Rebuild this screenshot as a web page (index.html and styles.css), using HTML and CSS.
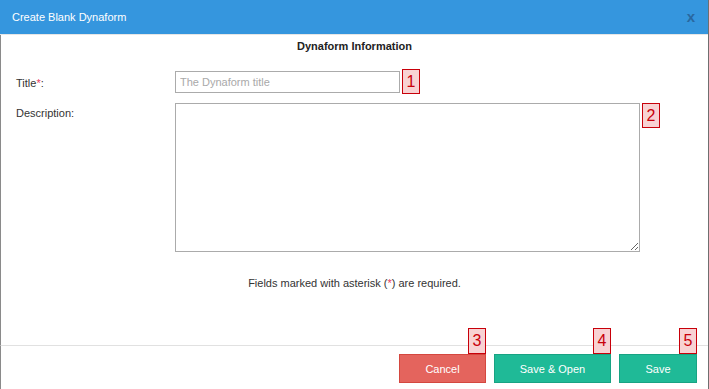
FILE: index.html
```html
<!DOCTYPE html>
<html lang="en">
<head>
    <meta charset="UTF-8">
    <title>Create Blank Dynaform</title>
    <link rel="stylesheet" href="styles.css">
</head>
<body>
    <div class="dialog">
        <div class="dialog-header">
            <span class="dialog-title">Create Blank Dynaform</span>
            <span class="dialog-close">x</span>
        </div>

        <div class="dialog-body">
            <div class="section-title">Dynaform Information</div>

            <div class="form-row">
                <label class="form-label" for="dynTitle">Title<span class="req">*</span>:</label>
                <div class="field">
                    <input type="text" id="dynTitle" class="text-input" placeholder="The Dynaform title">
                    <span class="marker">1</span>
                </div>
            </div>

            <div class="form-row row-desc">
                <label class="form-label" for="dynDesc">Description:</label>
                <div class="field">
                    <textarea id="dynDesc" class="text-area"></textarea>
                    <span class="marker">2</span>
                </div>
            </div>

            <p class="note">Fields marked with asterisk (<span class="req">*</span>) are required.</p>
        </div>

        <div class="dialog-footer">
            <div class="btn-wrap">
                <button class="btn btn-cancel">Cancel</button>
                <span class="marker marker-btn">3</span>
            </div>
            <div class="btn-wrap">
                <button class="btn btn-save btn-wide">Save &amp; Open</button>
                <span class="marker marker-btn">4</span>
            </div>
            <div class="btn-wrap">
                <button class="btn btn-save">Save</button>
                <span class="marker marker-btn">5</span>
            </div>
        </div>
    </div>
</body>
</html>
```

FILE: styles.css
```css
body {
    margin: 0;
    font-family: "Liberation Sans", Arial, sans-serif;
    font-size: 11px;
    color: #333;
    background: #fff;
}
.dialog {
    width: 709px;
    height: 389px;
    display: flex;
    flex-direction: column;
    box-sizing: border-box;
    border-right: 1px solid #6f6f6f;
}
.dialog-header {
    height: 34px;
    background-color: #3596de;
    border-bottom: 1px solid #e6e6e6;
    display: flex;
    align-items: center;
    justify-content: space-between;
    padding: 0 12px;
    flex-shrink: 0;
}
.dialog-title {
    color: #fff;
    font-size: 11px;
}
.dialog-close {
    color: #2968a0;
    font-weight: bold;
    font-size: 15px;
    margin-right: 1px;
    margin-top: -1px;
}
.dialog-body {
    flex: 1;
    border-left: 1px solid #8a8a8a;
    padding-top: 4px;
}
.section-title {
    text-align: center;
    font-weight: bold;
    line-height: 14px;
    color: #222;
}
.form-row {
    display: flex;
    margin-top: 18px;
}
.row-desc {
    margin-top: 9px;
}
.form-label {
    width: 159px;
    padding-left: 15px;
    line-height: 24px;
    height: 22px;
    color: #333;
}
.row-desc .form-label {
    line-height: 20px;
}
.req {
    color: #e8385f;
}
.field {
    display: flex;
    align-items: flex-start;
    gap: 2px;
}
.text-input {
    width: 225px;
    height: 22px;
    box-sizing: border-box;
    border: 1px solid #ababab;
    padding: 0 4px;
    font-family: "Liberation Sans", Arial, sans-serif;
    font-size: 11px;
    color: #333;
    outline: none;
}
.text-input::placeholder {
    color: #a9a9a9;
}
.text-area {
    width: 465px;
    height: 149px;
    box-sizing: border-box;
    border: 1px solid #ababab;
    margin: 0;
    font-family: "Liberation Sans", Arial, sans-serif;
    font-size: 11px;
    outline: none;
}
.marker {
    position: relative;
    width: 18px;
    height: 25px;
    box-sizing: border-box;
    background: #f8d2d3;
    border: 1px solid #c8000a;
    color: #c8000a;
    font-size: 16px;
    line-height: 23px;
    text-align: center;
}
.field .marker {
    margin-top: -2px;
}
.row-desc .field .marker {
    margin-top: 0;
}
.note {
    margin: 24px 0 0;
    text-align: center;
    line-height: 14px;
    color: #333;
}
.dialog-footer {
    border-top: 1px solid #e1e1e1;
    border-left: 1px solid #8a8a8a;
    height: 44px;
    box-sizing: border-box;
    display: flex;
    justify-content: flex-end;
    gap: 8px;
    padding: 8px 11px 0 0;
    flex-shrink: 0;
}
.btn-wrap {
    position: relative;
}
.btn {
    height: 29px;
    border: 1px solid;
    color: #fff;
    font-family: "Liberation Sans", Arial, sans-serif;
    font-size: 11px;
    cursor: pointer;
    padding: 0;
}
.btn-cancel {
    width: 87px;
    background-color: #e4645d;
    border-color: #d4473f;
}
.btn-save {
    width: 78px;
    background-color: #1fba97;
    border-color: #18a383;
}
.btn-wide {
    width: 117px;
}
.marker-btn {
    position: absolute;
    right: 0;
    bottom: 100%;
    width: 18px;
    height: 26px;
    line-height: 24px;
}
```
